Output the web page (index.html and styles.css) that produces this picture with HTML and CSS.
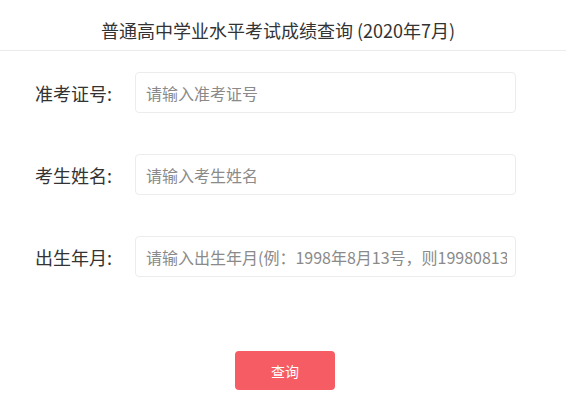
FILE: index.html
```html
<!DOCTYPE html>
<html lang="zh-CN">
<head>
<meta charset="utf-8">
<title>普通高中学业水平考试成绩查询</title>
<link rel="stylesheet" href="styles.css">
</head>
<body>
<header class="header">普通高中学业水平考试成绩查询 (2020年7月)</header>
<form class="form">
  <div class="row">
    <label class="label">准考证号:</label>
    <input class="input" type="text" placeholder="请输入准考证号">
  </div>
  <div class="row">
    <label class="label">考生姓名:</label>
    <input class="input" type="text" placeholder="请输入考生姓名">
  </div>
  <div class="row">
    <label class="label">出生年月:</label>
    <input class="input" type="text" placeholder="请输入出生年月(例：1998年8月13号，则19980813)">
  </div>
  <div class="actions">
    <button class="btn" type="button">查询</button>
  </div>
</form>
</body>
</html>
```

FILE: styles.css
```css
* { box-sizing: border-box; }
html, body { margin: 0; padding: 0; background: #fff; }
body {
  font-family: "Noto Sans CJK SC", "Noto Sans", sans-serif;
  color: #333;
}
.header {
  height: 51px;
  padding-top: 10px;
  padding-right: 10px;
  line-height: 40px;
  text-align: center;
  font-size: 18px;
  color: #333;
  border-bottom: 1px solid #ebebeb;
}
.form {
  padding: 21px 50px 0 0;
}
.row {
  display: flex;
  align-items: center;
  height: 41px;
  margin-bottom: 41px;
}
.label {
  width: 112px;
  text-align: right;
  font-size: 18px;
  color: #333;
  margin-right: 23px;
}
.input {
  flex: 1;
  height: 41px;
  border: 1px solid #ececec;
  border-radius: 4px;
  padding: 0 8px 0 10px;
  font-family: inherit;
  font-size: 16px;
  color: #333;
  outline: none;
}
.input::placeholder { color: #8a8a8a; }
.actions {
  display: flex;
  justify-content: center;
  padding-top: 33px;
  padding-left: 54px;
}
.btn {
  width: 100px;
  height: 39px;
  border: none;
  border-radius: 4px;
  background: #f55c64;
  color: #fff;
  font-family: inherit;
  font-size: 14px;
}
```
